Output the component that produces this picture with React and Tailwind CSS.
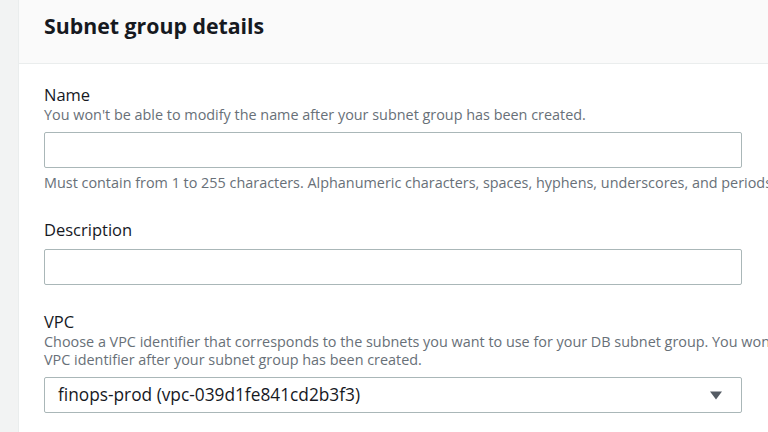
import React from 'react';

const Field = ({ label, description, hint, children }) => (
  <div className="flex flex-col">
    <label className="text-[16.5px] leading-[22px] text-[#16191f]">{label}</label>
    {description && (
      <div className="text-[14.4px] leading-[18px] text-[#687078]">{description}</div>
    )}
    <div className="mt-[8px]">{children}</div>
    {hint && <div className="mt-[6px] text-[14.4px] leading-[18px] text-[#687078] whitespace-nowrap">{hint}</div>}
  </div>
);

const App = () => {
  return (
    <div
      className="flex w-[768px] h-[432px] overflow-hidden bg-[#f2f3f3]"
      style={{ fontFamily: '"Open Sans", "Noto Sans", Arial, sans-serif' }}
    >
      <div className="w-[18px] shrink-0" />
      <div className="flex-1 flex flex-col bg-white border-l border-[#eaeded] overflow-hidden">
        <div className="h-[64px] shrink-0 bg-[#fafafa] border-b border-[#eaeded] px-[25px] flex items-center">
          <h2 className="text-[21.3px] font-bold text-[#16191f] -mt-[11px]">Subnet group details</h2>
        </div>
        <div className="px-[25px] pt-[20px] flex flex-col w-[749px]">
          <Field
            label="Name"
            description="You won't be able to modify the name after your subnet group has been created."
            hint="Must contain from 1 to 255 characters. Alphanumeric characters, spaces, hyphens, underscores, and periods are allowed."
          >
            <input className="w-[698px] h-[36px] border border-[#aab7b8] rounded-[2px] bg-white" />
          </Field>
          <div className="mt-[27px]">
            <Field label="Description">
              <input className="w-[698px] h-[36px] border border-[#aab7b8] rounded-[2px] bg-white" />
            </Field>
          </div>
          <div className="mt-[26px]">
            <Field
              label="VPC"
              description={
                <span className="whitespace-nowrap">
                  Choose a VPC identifier that corresponds to the subnets you want to use for your DB subnet group. You won't be able to choose a different
                  <br />
                  VPC identifier after your subnet group has been created.
                </span>
              }
            >
              <div className="w-[698px] h-[36px] border border-[#aab7b8] rounded-[2px] bg-white flex items-center justify-between pl-[13px] pr-[19px]">
                <span className="text-[17.3px] text-[#16191f]">finops-prod (vpc-039d1fe841cd2b3f3)</span>
                <svg width="12" height="9" viewBox="0 0 12 9">
                  <path d="M0 0.5 L12 0.5 L6 8.5 Z" fill="#545b64" />
                </svg>
              </div>
            </Field>
          </div>
        </div>
      </div>
    </div>
  );
};

export default App;
